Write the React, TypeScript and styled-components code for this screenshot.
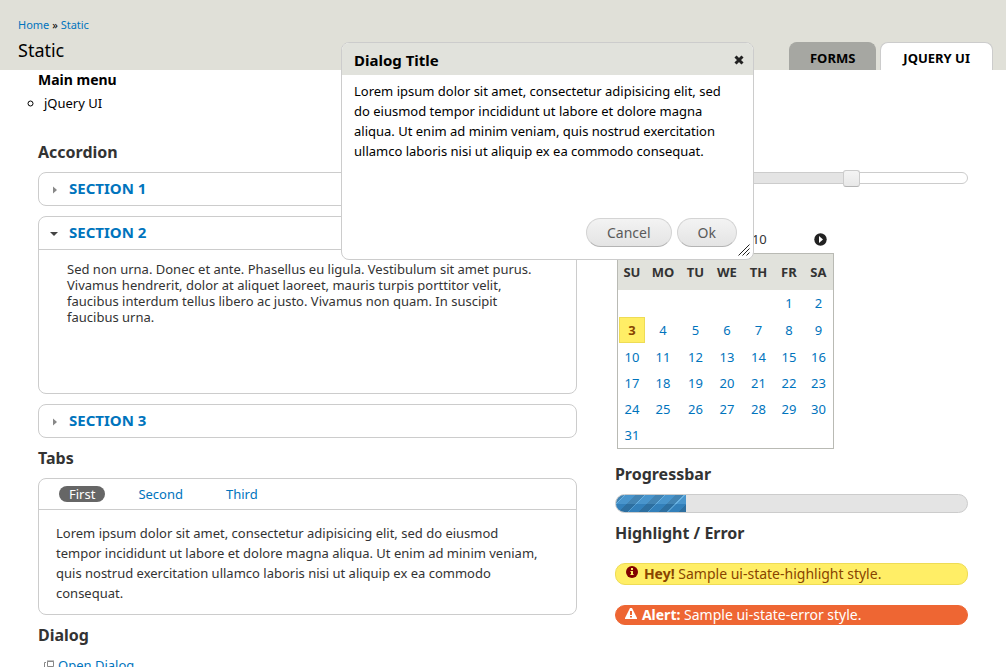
import React, { useState } from "react";
import styled, { createGlobalStyle } from "styled-components";

const link = "#0074bd";
const line = "#cccccc";
const band = "#e1e2dc";

const GlobalStyle = createGlobalStyle`
  *, *::before, *::after { box-sizing: border-box; }
  body {
    margin: 0;
    background: #fff;
    color: #333;
    font: 13px/20px "Noto Sans", "Open Sans", sans-serif;
  }
  button, input { font: inherit; color: inherit; }
  a { color: ${link}; text-decoration: none; }
  h1, h2, h3, p, ul { margin: 0; padding: 0; }
`;

const Page = styled.div`
  position: relative;
`;

const Branding = styled.header`
  display: flex;
  justify-content: space-between;
  align-items: flex-end;
  height: 70px;
  padding: 0 13px 0 18px;
  background: #e0e0d8;
  color: #000;
`;

const TitleBlock = styled.div`
  padding-bottom: 8px;
`;

const Breadcrumb = styled.nav`
  font-size: 11px;
  line-height: 20px;
  margin-bottom: 3px;
`;

const PageTitle = styled.h1`
  font-size: 18px;
  line-height: 24px;
  font-weight: 400;
`;

const PrimaryTabs = styled.nav`
  display: flex;
  gap: 4px;
`;

const PrimaryTab = styled.a<{ $active?: boolean }>`
  height: 28px;
  padding: 5px ${(p) => (p.$active ? 22 : 20)}px 0;
  border: 1px solid ${(p) => (p.$active ? line : "#a6a7a2")};
  border-bottom: 0;
  border-radius: 8px 8px 0 0;
  background: ${(p) => (p.$active ? "#fff" : "#a6a7a2")};
  color: #000;
  font-weight: 700;
  text-transform: uppercase;
`;

const Content = styled.div`
  padding: 0 38px;
`;

const MainMenu = styled.nav`
  color: #000;
  margin-bottom: 29px;
  a { color: #000; }
`;

const MenuHeading = styled.h2`
  font-size: 14px;
  line-height: 20px;
  margin-bottom: 3px;
`;

const MenuList = styled.ul`
  list-style: circle;
  && { padding-left: 6px; }
`;

const Columns = styled.main`
  display: grid;
  grid-template-columns: 58fr 38fr;
  column-gap: 38px;
  align-items: start;
`;

const Column = styled.div`
  min-width: 0;
`;

const Heading = styled.h3`
  font-size: 16px;
  line-height: 20px;
  margin: 10px 0;
  ${Column} > &:first-child { margin-top: 0; }
`;

const Accordion = styled.div`
  display: grid;
  gap: 10px;
`;

const Section = styled.section`
  border: 1px solid ${line};
  border-radius: 8px;
`;

const SectionHeader = styled.button`
  display: flex;
  align-items: center;
  gap: 10px;
  width: 100%;
  height: 32px;
  padding: 0 0 2px 10px;
  border: 0;
  background: none;
  color: ${link};
  font-size: 15px;
  font-weight: 700;
  text-align: left;
  text-transform: uppercase;
  cursor: pointer;
  svg { margin-top: 3px; }
`;

const SectionBody = styled.div`
  min-height: 144px;
  padding: 11px 28px;
  border-top: 1px solid ${line};
  line-height: 16px;
  white-space: pre-line;
`;

const TabsBox = styled.div`
  border: 1px solid ${line};
  border-radius: 8px;
`;

const TabList = styled.div`
  display: flex;
  align-items: center;
  gap: 23px;
  height: 31px;
  padding-left: 20px;
  border-bottom: 1px solid ${line};
`;

const Tab = styled.button<{ $active: boolean }>`
  height: 16px;
  padding: 0 10px;
  border: 0;
  border-radius: 8px;
  line-height: 16px;
  background: ${(p) => (p.$active ? "#666" : "none")};
  color: ${(p) => (p.$active ? "#fff" : link)};
  cursor: pointer;
`;

const TabPanel = styled.div`
  padding: 13px 17px 11px;
  white-space: pre-line;
`;

const OpenLink = styled.a`
  display: inline-flex;
  align-items: center;
  gap: 4px;
  padding-left: 6px;
`;

const Slider = styled.input`
  display: block;
  appearance: none;
  width: 100%;
  height: 12px;
  margin: 30px 0 41px;
  border: 1px solid ${line};
  border-radius: 6px;
  background: linear-gradient(to right, #e4e4e4 67%, #fff 67%);
  &::-webkit-slider-thumb {
    appearance: none;
    width: 17px;
    height: 17px;
    border: 1px solid ${line};
    border-bottom-color: #b4b4b4;
    border-radius: 3px;
    background: linear-gradient(#f4f4f4, #e8e8e8);
  }
`;

const DatePicker = styled.div`
  width: 217px;
  margin: 0 0 15px 2px;
`;

const MonthBar = styled.div`
  display: flex;
  align-items: center;
  justify-content: space-between;
  height: 28px;
  padding: 0 7px;
`;

const IconButton = styled.button`
  display: block;
  padding: 0;
  border: 0;
  background: none;
  cursor: pointer;
  svg { display: block; }
`;

const Calendar = styled.table`
  width: 100%;
  border: 1px solid #b9bab4;
  border-spacing: 0;
  table-layout: fixed;
  text-align: center;
  th, td { padding: 0; height: 26px; }
  thead th { height: 36px; background: ${band}; text-transform: uppercase; }
`;

const Day = styled.a<{ $today?: boolean }>`
  display: block;
  height: ${(p) => (p.$today ? 26 : 20)}px;
  margin: ${(p) => (p.$today ? "1px" : 0)};
  line-height: ${(p) => (p.$today ? 24 : 20)}px;
  border: ${(p) => (p.$today ? "1px solid #eedc55" : 0)};
  background: ${(p) => (p.$today ? "#ffee66" : "none")};
  color: ${(p) => (p.$today ? "#884400" : link)};
  font-weight: ${(p) => (p.$today ? 700 : 400)};
`;

const ProgressTrack = styled.div`
  height: 19px;
  margin-bottom: 10px;
  border: 1px solid ${line};
  border-radius: 10px;
  background: #e4e4e4;
  overflow: hidden;
`;

const ProgressFill = styled.div`
  height: 100%;
  background:
    linear-gradient(rgba(255, 255, 255, 0.08) 55%, rgba(0, 20, 60, 0.1) 55%),
    repeating-linear-gradient(
      135deg,
      #3279ac 0, #3279ac 6px,
      #5cabdf 6px, #5cabdf 7px,
      #398cc8 7px, #398cc8 14px
    );
`;

const Message = styled.p<{ $error?: boolean }>`
  display: flex;
  align-items: center;
  gap: 5px;
  height: ${(p) => (p.$error ? 20 : 22)}px;
  && { margin-top: 20px; padding-left: 9px; }
  border: 1px solid ${(p) => (p.$error ? "#ee6633" : "#eedc55")};
  border-radius: 10px;
  background: ${(p) => (p.$error ? "#ee6633" : "#ffee66")};
  color: ${(p) => (p.$error ? "#fff" : "#884400")};
  font-size: 14px;
  svg { flex: none; margin-bottom: 4px; }
`;

const DialogWindow = styled.div`
  position: absolute;
  z-index: 10;
  top: 42px;
  left: 341px;
  display: flex;
  flex-direction: column;
  width: 413px;
  height: 218px;
  border: 1px solid ${line};
  border-radius: 8px;
  background: #fff;
  color: #000;
  overflow: hidden;
`;

const DialogBar = styled.div`
  display: flex;
  align-items: center;
  justify-content: space-between;
  height: 32px;
  padding: 2px 9px 0 12px;
  background: ${band};
`;

const DialogTitle = styled.h2`
  font-size: 15px;
  line-height: 20px;
`;

const DialogBody = styled.div`
  flex: 1;
  padding: 6px 12px;
  white-space: pre-line;
`;

const DialogButtons = styled.div`
  display: flex;
  justify-content: flex-end;
  gap: 5px;
  padding: 0 16px 12px;
`;

const PillButton = styled.button`
  height: 29px;
  padding: 0 20px;
  border: 1px solid #d4d4d4;
  border-bottom-color: #b4b4b4;
  border-radius: 15px;
  background: linear-gradient(#f3f3f3, #e4e4e4);
  color: #5a5a5a;
  font-size: 14px;
  cursor: pointer;
`;

const ResizeGrip = styled.svg`
  position: absolute;
  right: 3px;
  bottom: 3px;
  cursor: se-resize;
`;

const Arrow = ({ open }: { open?: boolean }) => (
  <svg width="10" height="10" viewBox="0 0 10 10" aria-hidden="true">
    {open ? (
      <path d="M1 3h8L5 7z" fill="#444" />
    ) : (
      <path d="M4 1.500v7l4-3.500z" fill="#888" />
    )}
  </svg>
);

const CircleArrow = ({ left }: { left?: boolean }) => (
  <svg width="13" height="13" viewBox="0 0 13 13" aria-hidden="true">
    <circle cx="6.500" cy="6.500" r="6.200" fill="#222" />
    <path d={left ? "M8 3v7L4 6.500z" : "M5 3v7l4-3.500z"} fill="#fff" />
  </svg>
);

const InfoIcon = () => (
  <svg width="14" height="12" viewBox="0 0 14 12" aria-hidden="true">
    <circle cx="7" cy="6" r="6" fill="#800000" />
    <path d="M6 2h2v2H6zM6 5h2v4H6z" fill="#fe6" />
    <path d="M5 5h1v1H5zM5 8h4v1H5z" fill="#fe6" fillOpacity="0.6" />
  </svg>
);

const AlertIcon = () => (
  <svg width="12" height="11" viewBox="0 0 12 11" aria-hidden="true">
    <path d="M5 0h2l5 10v1H0v-1z" fill="#fff" />
    <path d="M5 3h2v4H5zM5 8h2v1.500H5z" fill="#e63" />
  </svg>
);

const NewWindowIcon = () => (
  <svg width="10" height="10" viewBox="0 0 10 10" fill="none" stroke="#888" aria-hidden="true">
    <path d="M3.500 1.500h6v5h-6z" />
    <path d="M3 1h7" />
    <path d="M2 2.500H.5v7h6V8" />
  </svg>
);

const CloseIcon = () => (
  <svg width="10" height="10" viewBox="0 0 10 10" aria-hidden="true">
    <path d="M1.500 1.500l7 7M8.500 1.500l-7 7" stroke="#222" strokeWidth="3" />
  </svg>
);

const sections = ["Section 1", "Section 2", "Section 3"];

const sectionText = `Sed non urna. Donec et ante. Phasellus eu ligula. Vestibulum sit amet purus.
Vivamus hendrerit, dolor at aliquet laoreet, mauris turpis porttitor velit,
faucibus interdum tellus libero ac justo. Vivamus non quam. In suscipit
faucibus urna.`;

const tabText = `Lorem ipsum dolor sit amet, consectetur adipisicing elit, sed do eiusmod
tempor incididunt ut labore et dolore magna aliqua. Ut enim ad minim veniam,
quis nostrud exercitation ullamco laboris nisi ut aliquip ex ea commodo
consequat.`;

const dialogText = `Lorem ipsum dolor sit amet, consectetur adipisicing elit, sed
do eiusmod tempor incididunt ut labore et dolore magna
aliqua. Ut enim ad minim veniam, quis nostrud exercitation
ullamco laboris nisi ut aliquip ex ea commodo consequat.`;

const tabNames = ["First", "Second", "Third"];
const weekdays: [string, number][] = [
  ["Su", 28], ["Mo", 34], ["Tu", 31], ["We", 32], ["Th", 31], ["Fr", 30], ["Sa", 29],
];
const firstWeekday = 5;
const weeks = Array.from({ length: 6 }, (_, w) =>
  Array.from({ length: 7 }, (_, d) => w * 7 + d - firstWeekday + 1)
);

export default function App() {
  const [open, setOpen] = useState(1);
  const [tab, setTab] = useState(0);
  const [dialog, setDialog] = useState(true);
  const progress = 20;

  return (
    <Page>
      <GlobalStyle />
      <Branding>
        <TitleBlock>
          <Breadcrumb aria-label="Breadcrumb">
            <a href="#home">Home</a> » <a href="#static">Static</a>
          </Breadcrumb>
          <PageTitle>Static</PageTitle>
        </TitleBlock>
        <PrimaryTabs aria-label="Primary">
          <PrimaryTab href="#forms">Forms</PrimaryTab>
          <PrimaryTab href="#jquery-ui" $active>jQuery UI</PrimaryTab>
        </PrimaryTabs>
      </Branding>

      <Content>
        <MainMenu>
          <MenuHeading>Main menu</MenuHeading>
          <MenuList>
            <li><a href="#jquery-ui">jQuery UI</a></li>
          </MenuList>
        </MainMenu>

        <Columns>
          <Column>
            <Heading>Accordion</Heading>
            <Accordion>
              {sections.map((name, i) => (
                <Section key={name}>
                  <SectionHeader aria-expanded={open === i} onClick={() => setOpen(i)}>
                    <Arrow open={open === i} />
                    {name}
                  </SectionHeader>
                  {open === i && <SectionBody>{sectionText}</SectionBody>}
                </Section>
              ))}
            </Accordion>

            <Heading>Tabs</Heading>
            <TabsBox>
              <TabList role="tablist">
                {tabNames.map((name, i) => (
                  <Tab
                    key={name}
                    role="tab"
                    aria-selected={tab === i}
                    $active={tab === i}
                    onClick={() => setTab(i)}
                  >
                    {name}
                  </Tab>
                ))}
              </TabList>
              <TabPanel role="tabpanel">{tabText}</TabPanel>
            </TabsBox>

            <Heading>Dialog</Heading>
            <OpenLink href="#dialog" onClick={() => setDialog(true)}>
              <NewWindowIcon />
              Open Dialog
            </OpenLink>
          </Column>

          <Column>
            <Slider type="range" min={0} max={100} defaultValue={68} aria-label="Slider" />
            <DatePicker>
              <MonthBar>
                <IconButton aria-label="Previous month"><CircleArrow left /></IconButton>
                <span>October 2010</span>
                <IconButton aria-label="Next month"><CircleArrow /></IconButton>
              </MonthBar>
              <Calendar>
                <colgroup>
                  {weekdays.map(([d, w]) => <col key={d} width={w} />)}
                </colgroup>
                <thead>
                  <tr>{weekdays.map(([d]) => <th key={d} scope="col">{d}</th>)}</tr>
                </thead>
                <tbody>
                  {weeks.map((week, w) => (
                    <tr key={w}>
                      {week.map((d) => (
                        <td key={d}>
                          {d > 0 && d <= 31 && <Day href={`#day-${d}`} $today={d === 3}>{d}</Day>}
                        </td>
                      ))}
                    </tr>
                  ))}
                </tbody>
              </Calendar>
            </DatePicker>

            <Heading>Progressbar</Heading>
            <ProgressTrack role="progressbar" aria-label="Progress" aria-valuenow={progress}>
              <ProgressFill style={{ width: `${progress}%` }} />
            </ProgressTrack>

            <Heading>Highlight / Error</Heading>
            <Message>
              <InfoIcon />
              <span><strong>Hey!</strong> Sample ui-state-highlight style.</span>
            </Message>
            <Message $error>
              <AlertIcon />
              <span><strong>Alert:</strong> Sample ui-state-error style.</span>
            </Message>
          </Column>
        </Columns>
      </Content>

      {dialog && (
        <DialogWindow role="dialog" aria-labelledby="dialog-title">
          <DialogBar>
            <DialogTitle id="dialog-title">Dialog Title</DialogTitle>
            <IconButton aria-label="Close" onClick={() => setDialog(false)}>
              <CloseIcon />
            </IconButton>
          </DialogBar>
          <DialogBody>{dialogText}</DialogBody>
          <DialogButtons>
            <PillButton onClick={() => setDialog(false)}>Cancel</PillButton>
            <PillButton onClick={() => setDialog(false)}>Ok</PillButton>
          </DialogButtons>
          <ResizeGrip width="12" height="12" viewBox="0 0 12 12" aria-hidden="true">
            <path d="M0.500 11.500l11-11M4.500 11.500l7-7M8.500 11.500l3-3" stroke="#222" />
          </ResizeGrip>
        </DialogWindow>
      )}
    </Page>
  );
}
